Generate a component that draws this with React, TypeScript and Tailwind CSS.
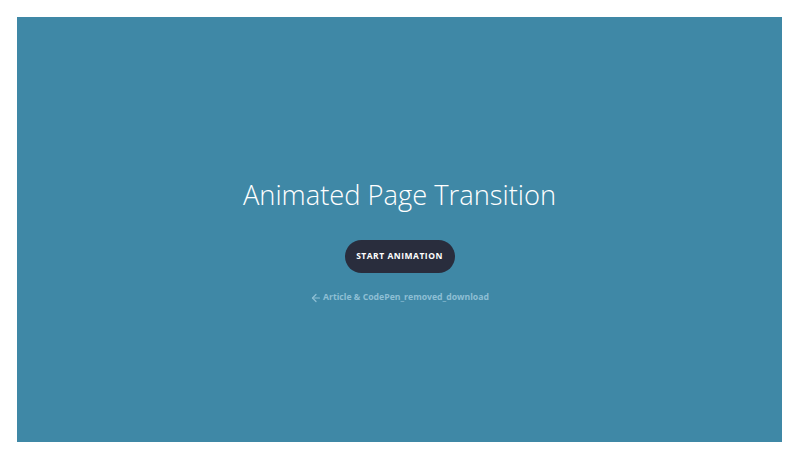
import { ArrowLeft } from 'lucide-react'

export default function App() {
  return (
    <main className="h-[450px] w-[800px] bg-white pt-[17px] pl-[17px] font-['Open_Sans',sans-serif]">
      <section className="flex h-[425px] w-[765px] flex-col items-center bg-[#3f88a6] pt-[160px]">
        <h1 className="text-[27.3px] font-light leading-[36px] text-white">Animated Page Transition</h1>
        <button className="mt-[27px] h-[33px] w-[110px] rounded-full bg-[#292d3d] text-[8.5px] font-bold tracking-[0.06em] text-white">
          START ANIMATION
        </button>
        <a href="#" className="mt-[18px] flex h-[14px] items-center gap-[1px] text-[8.7px] font-bold text-[#8ebfd4]">
          <ArrowLeft size={12} strokeWidth={2.4} />
          Article &amp; CodePen_removed_download
        </a>
      </section>
    </main>
  )
}
